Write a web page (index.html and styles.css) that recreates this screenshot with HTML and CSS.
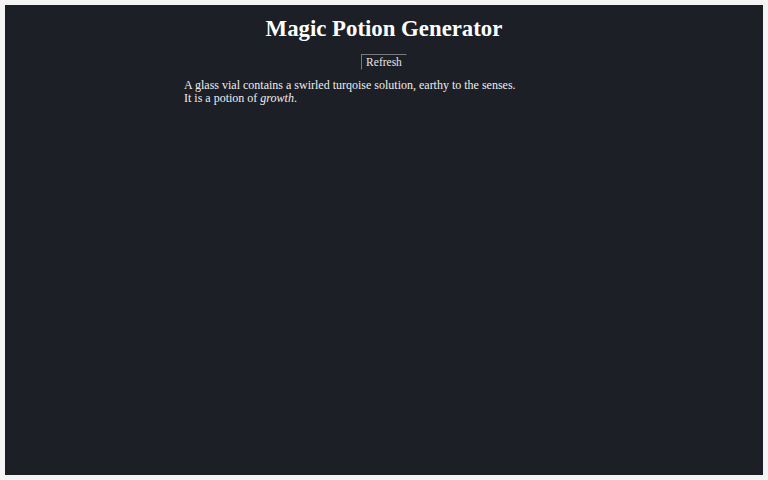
FILE: index.html
```html
<!DOCTYPE html>
<html>
<head>
<meta charset="utf-8">
<link rel="stylesheet" href="styles.css">
</head>
<body>
<main class="panel">
  <h1 class="title">Magic Potion Generator</h1>
  <div class="actions"><button class="refresh">Refresh</button></div>
  <p class="desc">A glass vial contains a swirled turqoise solution, earthy to the senses.<br>It is a potion of <em>growth</em>.</p>
</main>
</body>
</html>
```
FILE: styles.css
```css
html, body {
  margin: 0;
  padding: 0;
}
body {
  background: #f4f4f4;
  padding: 5px;
  font-family: "Liberation Serif", "DejaVu Serif", serif;
}
.panel {
  background: #1c1f26;
  height: 470px;
  box-sizing: border-box;
  padding-top: 10px;
  color: #f0f0f0;
  display: flex;
  flex-direction: column;
  align-items: center;
}
.title {
  margin: 0;
  font-size: 22.8px;
  font-weight: bold;
  line-height: 28px;
  color: #ffffff;
}
.actions {
  margin-top: 9px;
}
.refresh {
  font-family: inherit;
  font-size: 11.5px;
  color: #e6e6e6;
  background: #1c1f26;
  border: 1px solid #1c1f26;
  border-top-color: #7a7a7a;
  border-left-color: #7a7a7a;
  padding: 1px 4px 1px 4px;
  height: 16px;
  line-height: 13px;
}
.desc {
  width: 400px;
  margin: 9px 0 0 0;
  font-size: 12px;
  line-height: 13px;
  color: #eeeeee;
}
```
